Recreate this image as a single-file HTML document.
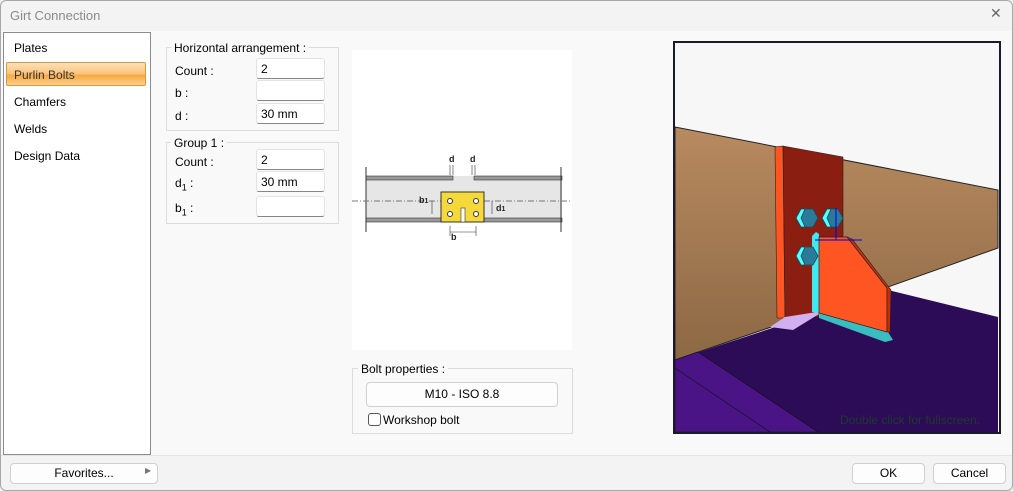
<!DOCTYPE html><html><head><style>
*{box-sizing:border-box;margin:0;padding:0}
body{width:1013px;height:491px;overflow:hidden;background:#f3f3f3;font-family:"Liberation Sans",sans-serif;font-size:12px;color:#000;position:relative}
.a{position:absolute}
.win{left:0;top:0;width:1013px;height:491px;border:1px solid #a8a8a8;border-radius:6px;background:#f3f3f3}
.in{background:#fff;border:1px solid #e3e3e3;border-bottom:1px solid #868686;border-radius:3px;padding:3px 4px;font-size:12px;height:21px}
.gb{border:1px solid #dcdcdc}
.gl{background:#f9f9f9;padding:0 3px;font-size:12px}
.btn{background:#fdfdfd;border:1px solid #d0d0d0;border-radius:4px;text-align:center;font-size:12px}
</style></head><body>
<div class="a win"></div>
<div class="a" style="left:10px;top:8px;color:#8a8a8a;font-size:13px">Girt Connection</div>
<div class="a" style="left:990px;top:5px;font-size:14px;color:#666">✕</div>
<div class="a" style="left:1px;top:31px;width:1011px;height:424px;background:#f9f9f9"></div>
<div class="a" style="left:3px;top:32px;width:148px;height:423px;background:#fff;border:1px solid #8c8c8c"></div>
<div class="a" style="left:14px;top:41px">Plates</div>
<div class="a" style="left:6px;top:62px;width:140px;height:24px;border:1px solid #d89a3a;border-radius:2px;background:linear-gradient(#fde0b8,#fbc37a 50%,#f7a940 55%,#fcd08f)"></div>
<div class="a" style="left:14px;top:68px;color:#333">Purlin Bolts</div>
<div class="a" style="left:14px;top:95px">Chamfers</div>
<div class="a" style="left:14px;top:122px">Welds</div>
<div class="a" style="left:14px;top:149px">Design Data</div>

<div class="a gb" style="left:166px;top:47px;width:173px;height:84px"></div>
<div class="a gl" style="left:171px;top:41px">Horizontal arrangement :</div>
<div class="a" style="left:175px;top:64px">Count :</div>
<div class="a" style="left:175px;top:86px">b :</div>
<div class="a" style="left:175px;top:109px">d :</div>
<div class="a in" style="left:256px;top:58px;width:69px">2</div>
<div class="a in" style="left:256px;top:80px;width:69px"></div>
<div class="a in" style="left:256px;top:103px;width:69px">30 mm</div>
<div class="a gb" style="left:166px;top:142px;width:173px;height:82px"></div>
<div class="a gl" style="left:171px;top:136px">Group 1 :</div>
<div class="a" style="left:175px;top:155px">Count :</div>
<div class="a" style="left:175px;top:176px">d<sub style="font-size:9px">1</sub> :</div>
<div class="a" style="left:175px;top:201px">b<sub style="font-size:9px">1</sub> :</div>
<div class="a in" style="left:256px;top:149px;width:69px">2</div>
<div class="a in" style="left:256px;top:171px;width:69px">30 mm</div>
<div class="a in" style="left:256px;top:196px;width:69px"></div>

<svg class="a" style="left:352px;top:50px" width="220" height="300" viewBox="352 50 220 300">
<rect x="352" y="50" width="220" height="300" fill="#fff"/>
<rect x="366" y="176" width="196" height="46" fill="#e6e6e6"/>
<rect x="366" y="176" width="87" height="4" fill="#999" stroke="#333" stroke-width=".6"/>
<rect x="474" y="176" width="88" height="4" fill="#999" stroke="#333" stroke-width=".6"/>
<rect x="366" y="218" width="196" height="4" fill="#999" stroke="#333" stroke-width=".6"/>
<line x1="366" y1="167" x2="366" y2="232" stroke="#333"/><line x1="561" y1="167" x2="561" y2="232" stroke="#333"/>
<line x1="352" y1="201" x2="572" y2="201" stroke="#777" stroke-dasharray="6,2,1,2"/>
<rect x="441" y="192" width="43" height="30" fill="#f5d83a" stroke="#333"/>
<rect x="461" y="208" width="4" height="14" fill="#fff" stroke="#333" stroke-width=".6"/>
<g fill="#fff" stroke="#333"><circle cx="450" cy="201" r="2.5"/><circle cx="476" cy="201" r="2.5"/><circle cx="450" cy="214" r="2.5"/><circle cx="476" cy="214" r="2.5"/></g>
<g stroke="#333" stroke-width=".6"><line x1="450" y1="165" x2="450" y2="175"/><line x1="453" y1="165" x2="453" y2="175"/><line x1="472" y1="165" x2="472" y2="175"/><line x1="475" y1="165" x2="475" y2="175"/><line x1="432" y1="201" x2="432" y2="214"/><line x1="492" y1="201" x2="492" y2="214"/><line x1="450" y1="226" x2="450" y2="236"/><line x1="476" y1="226" x2="476" y2="236"/></g>
<g font-size="9" font-weight="bold" fill="#222"><text x="449" y="162">d</text><text x="470" y="162">d</text><text x="419" y="203">b<tspan font-size="7">1</tspan></text><text x="496" y="211">d<tspan font-size="7">1</tspan></text><text x="451" y="240">b</text></g>
<line x1="450" y1="232" x2="476" y2="232" stroke="#333" stroke-width=".6"/>
</svg>

<div class="a gb" style="left:352px;top:368px;width:221px;height:66px"></div>
<div class="a gl" style="left:358px;top:362px">Bolt properties :</div>
<div class="a btn" style="left:366px;top:382px;width:192px;height:25px;line-height:23px">M10 - ISO 8.8</div>
<div class="a" style="left:368px;top:413px;width:13px;height:13px;border:1px solid #555;border-radius:3px;background:#fff"></div>
<div class="a" style="left:383px;top:413px">Workshop bolt</div>

<svg class="a" style="left:673px;top:41px" width="328" height="393" viewBox="673 41 328 393">
<rect x="673" y="41" width="328" height="393" fill="#f7f7f7"/>
<defs><linearGradient id="w" x1="0" y1="0" x2="0" y2="1"><stop offset="0" stop-color="#b88a60"/><stop offset="1" stop-color="#8c6844"/></linearGradient></defs>
<polygon points="675,127 998,190 998,248 888,287 675,360" fill="url(#w)" stroke="#222"/>
<polygon points="675,360 888,290 998,317 998,432 675,432" fill="#2d0c57"/>
<polygon points="675,360 698,352 818,432 675,432" fill="#4a1486" stroke="#111" stroke-width=".6"/>
<line x1="675" y1="368" x2="770" y2="432" stroke="#111" stroke-width=".6"/>
<polygon points="775,147 783,146 785,318 777,318" fill="#ff5522" stroke="#222" stroke-width=".6"/>
<polygon points="783,146 843,157 843,316 785,318" fill="#8a1e10" stroke="#222" stroke-width=".6"/>
<polygon points="770,327 785,317 817,312 819,314 793,330" fill="#d2b0f0"/>
<polygon points="819,312 888,332 893,340 885,342 819,318" fill="#3bbdc0"/>
<polygon points="812,236 816,232 819,234 819,313 812,312" fill="#40e8ef"/>
<polygon points="819,237 847,237 887,288 887,332 819,313" fill="#ff5522" stroke="#222" stroke-width=".7"/>
<polygon points="847,237 852,239 891,290 890,332 887,332 887,288" fill="#c03010" stroke="#222" stroke-width=".6"/>
<g stroke="#1a4a5a" stroke-width=".8">
<polygon points="796,218 801,209 813,209 818,218 813,227 801,227" fill="#2a7a9a"/><polygon points="796,218 801,209 805,209 801,218 805,227 801,227" fill="#5ff"/>
<polygon points="822,218 827,209 838,209 843,218 838,227 827,227" fill="#2a7a9a"/><polygon points="822,218 827,209 831,209 827,218 831,227 827,227" fill="#5ff"/>
<polygon points="796,256 801,247 813,247 818,256 813,265 801,265" fill="#2a7a9a"/><polygon points="796,256 801,247 805,247 801,256 805,265 801,265" fill="#5ff"/></g>
<g stroke="#0000ee" stroke-width="1"><line x1="836" y1="208" x2="836" y2="240"/><line x1="815" y1="240" x2="862" y2="240"/></g>
<text x="840" y="424" font-size="12" fill="#1d3a2a" font-family="Liberation Sans,sans-serif" textLength="140">Double click for fullscreen.</text>
<rect x="674" y="42" width="326" height="391" fill="none" stroke="#1a1a2a" stroke-width="2"/>
</svg>

<div class="a" style="left:1px;top:455px;width:1011px;height:1px;background:#e5e5e5"></div>
<div class="a btn" style="left:10px;top:463px;width:148px;height:21px;line-height:19px">Favorites...</div>
<div class="a" style="left:145px;top:466px;font-size:8px;color:#777">▶</div>
<div class="a btn" style="left:852px;top:463px;width:73px;height:21px;line-height:19px">OK</div>
<div class="a btn" style="left:933px;top:463px;width:73px;height:21px;line-height:19px">Cancel</div>
</body></html>
